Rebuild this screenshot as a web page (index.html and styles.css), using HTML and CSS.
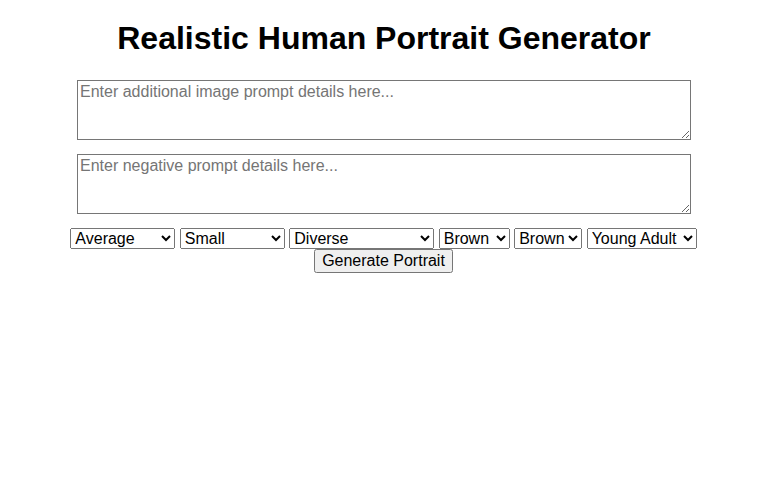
FILE: index.html
```html
<!DOCTYPE html>
<html>
<head>
<meta charset="utf-8">
<title>Realistic Human Portrait Generator</title>
<link rel="stylesheet" href="styles.css">
</head>
<body>
<div class="app">
  <h1 class="title">Realistic Human Portrait Generator</h1>
  <textarea class="prompt" placeholder="Enter additional image prompt details here..."></textarea>
  <textarea class="prompt" placeholder="Enter negative prompt details here..."></textarea>
  <div class="controls">
    <select class="sel sel-build"><option>Average</option></select>
    <select class="sel sel-size"><option>Small</option></select>
    <select class="sel sel-eth"><option>Diverse</option></select>
    <select class="sel sel-hair"><option>Brown</option></select>
    <select class="sel sel-eye"><option>Brown</option></select>
    <select class="sel sel-age"><option>Young Adult</option></select>
    <br>
    <button class="generate">Generate Portrait</button>
  </div>
</div>
</body>
</html>
```
FILE: styles.css
```css
html, body {
  margin: 0;
  padding: 0;
  background: #fff;
}
.app {
  font-family: "Liberation Sans", Arial, sans-serif;
  text-align: center;
  padding-top: 1px;
}
.title {
  font-size: 32px;
  font-weight: bold;
  margin: 19px 0 23px;
  color: #000;
}
.prompt {
  display: block;
  box-sizing: border-box;
  width: 614px;
  height: 60px;
  margin: 0 auto 14px;
  font-family: "Liberation Sans", Arial, sans-serif;
  font-size: 16px;
  padding: 2px;
  border: 1px solid #767676;
  resize: vertical;
}
.prompt::placeholder {
  color: #757575;
}
.controls {
  font-size: 16px;
  line-height: 1;
  padding-right: 1px;
}
.sel {
  font-family: "Liberation Sans", Arial, sans-serif;
  font-size: 16px;
  height: 21px;
  box-sizing: border-box;
  vertical-align: top;
}
.sel-build { width: 105px; }
.sel-size { width: 105px; }
.sel-eth { width: 145px; }
.sel-hair { width: 71px; }
.sel-eye { width: 68px; }
.sel-age { width: 110px; }
.generate {
  font-family: "Liberation Sans", Arial, sans-serif;
  font-size: 16px;
  margin-top: 0;
}
```
